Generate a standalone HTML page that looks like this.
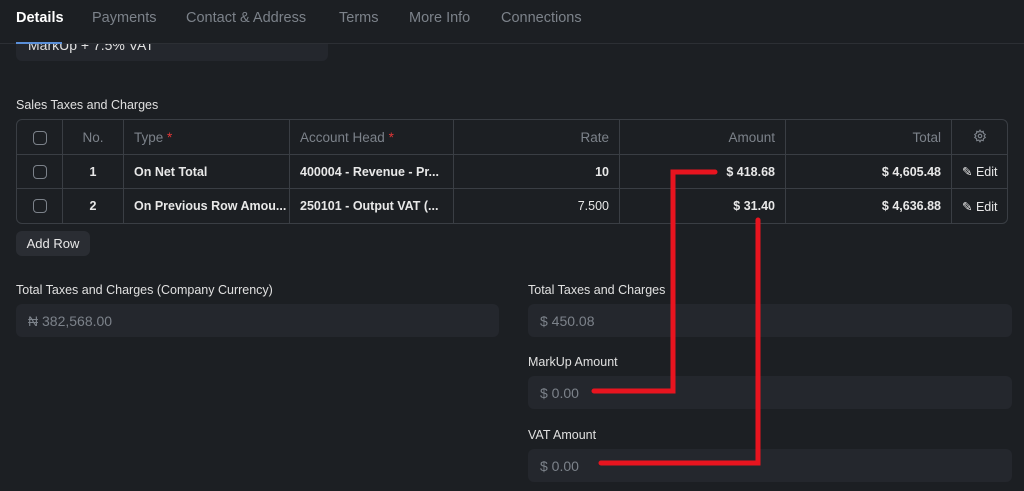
<!DOCTYPE html>
<html><head><meta charset="utf-8"><style>
*{box-sizing:border-box;margin:0;padding:0}
body{width:1024px;height:491px;background:#1c1f23;font-family:"Liberation Sans",sans-serif;color:#e8e8e8;position:relative;overflow:hidden;font-size:13px}
.a{position:absolute}
.tabs{top:0;left:0;width:1024px;height:44px;border-bottom:1px solid #2c2f34;background:#1c1f23;z-index:2}
.tab{position:absolute;top:10px;font-size:14.5px;color:#7c828a}
.inp{background:#24272d;border-radius:6px;color:#7c828a;font-size:14px;padding-left:12px;display:flex;align-items:center}
.lbl{font-size:12.5px;color:#e0e0e0}
table{border-collapse:separate;border-spacing:0;border:1px solid #3a3e44;border-radius:6px;position:absolute;left:16px;top:119px;width:992px;table-layout:fixed}
td{border-right:1px solid #3a3e44;border-bottom:1px solid #3a3e44;height:34px;padding:0 10px;font-size:12.5px;font-weight:bold;white-space:nowrap;overflow:hidden}
tr:last-child td{border-bottom:none}
td:last-child{border-right:none}
th{border-right:1px solid #3a3e44;border-bottom:1px solid #3a3e44;height:35px;padding:0 10px;font-size:13.5px;font-weight:normal;color:#7c828a;text-align:left}
th:last-child{border-right:none}
.r{text-align:right}.c{text-align:center}
.cb{display:inline-block;width:14px;height:14px;border:1px solid #7c828a;border-radius:4px;vertical-align:middle}
.st{color:#e03636}
</style></head><body>
<div class="a tabs">
<div class="tab" style="left:16px;color:#fff;font-weight:bold">Details</div>
<div class="tab" style="left:92px">Payments</div>
<div class="tab" style="left:186px">Contact &amp; Address</div>
<div class="tab" style="left:339px">Terms</div>
<div class="tab" style="left:409px">More Info</div>
<div class="tab" style="left:501px">Connections</div>
<div class="a" style="left:16px;top:42px;width:46px;height:2px;background:#5a8fd8"></div>
</div>
<div class="a inp" style="left:16px;top:30px;width:312px;height:31px;color:#e0e0e0;align-items:flex-end;padding-bottom:8px">MarkUp + 7.5% VAT</div>
<div class="a lbl" style="left:16px;top:98px">Sales Taxes and Charges</div>
<table>
<colgroup><col style="width:46px"><col style="width:61px"><col style="width:166px"><col style="width:164px"><col style="width:166px"><col style="width:166px"><col style="width:166px"><col></colgroup>
<tr><th class="c"><span class="cb"></span></th><th class="c">No.</th><th>Type <span class="st">*</span></th><th>Account Head <span class="st">*</span></th><th class="r">Rate</th><th class="r">Amount</th><th class="r">Total</th><th class="c"><svg width="14" height="14" viewBox="0 0 24 24" fill="none" stroke="#7c828a" stroke-width="2"><circle cx="12" cy="12" r="3"/><path d="M12 2l2 3 3.5-1 .5 3.5 3 2-2 2.5 2 2.5-3 2-.5 3.5-3.5-1-2 3-2-3-3.5 1-.5-3.5-3-2 2-2.5-2-2.5 3-2 .5-3.5 3.5 1z"/></svg></th></tr>
<tr><td class="c"><span class="cb"></span></td><td class="c">1</td><td>On Net Total</td><td>400004 - Revenue - Pr...</td><td class="r">10</td><td class="r">$ 418.68</td><td class="r">$ 4,605.48</td><td class="c" style="font-weight:normal">✎ Edit</td></tr>
<tr><td class="c"><span class="cb"></span></td><td class="c">2</td><td>On Previous Row Amou...</td><td>250101 - Output VAT (...</td><td class="r" style="font-weight:normal">7.500</td><td class="r">$ 31.40</td><td class="r">$ 4,636.88</td><td class="c" style="font-weight:normal">✎ Edit</td></tr>
</table>
<div class="a" style="left:16px;top:231px;width:74px;height:25px;background:#2a2d33;border-radius:6px;font-size:13px;display:flex;align-items:center;justify-content:center">Add Row</div>
<div class="a lbl" style="left:16px;top:283px">Total Taxes and Charges (Company Currency)</div>
<div class="a inp" style="left:16px;top:304px;width:483px;height:33px">₦ 382,568.00</div>
<div class="a lbl" style="left:528px;top:283px">Total Taxes and Charges</div>
<div class="a inp" style="left:528px;top:304px;width:484px;height:33px">$ 450.08</div>
<div class="a lbl" style="left:528px;top:355px">MarkUp Amount</div>
<div class="a inp" style="left:528px;top:376px;width:484px;height:33px">$ 0.00</div>
<div class="a lbl" style="left:528px;top:428px">VAT Amount</div>
<div class="a inp" style="left:528px;top:449px;width:484px;height:33px">$ 0.00</div>
<svg class="a" style="left:0;top:0" width="1024" height="491"><g fill="none" stroke="#e8141f" stroke-width="5" stroke-linecap="round" stroke-linejoin="miter">
<path d="M715 172H673V391H594"/><path d="M758 220V463H601"/></g></svg>
</body></html>
